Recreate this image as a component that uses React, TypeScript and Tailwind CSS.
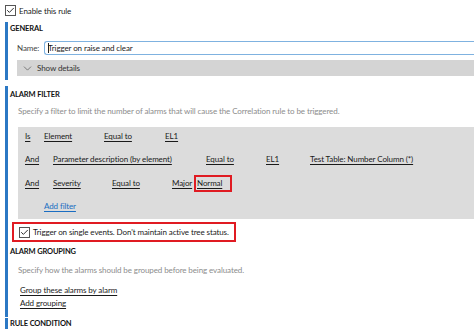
import { Check, ChevronDown } from 'lucide-react';

function Box() {
  return (
    <span className="flex h-[11px] w-[11px] shrink-0 items-center justify-center border border-[#555] bg-white">
      <Check className="h-[9px] w-[9px] text-[#222]" strokeWidth={2.5} />
    </span>
  );
}

function Cell({ w, children }: { w: string; children: React.ReactNode }) {
  return (
    <span className={`${w} shrink-0 whitespace-nowrap`}>
      <span className="underline underline-offset-2">{children}</span>
    </span>
  );
}

const heading = 'flex items-center text-[7.5px] font-bold tracking-[-0.15px] text-[#111]';

export default function App() {
  return (
    <div className="h-[329px] w-[474px] overflow-hidden whitespace-nowrap bg-white font-['Lato',sans-serif] text-[8px] leading-none tracking-[-0.1px] text-[#1a1a1a]">
      {/* Activer la règle */}
      <div className="flex h-[21px] items-center gap-[3px] pl-[5px]">
        <Box />
        <span className="text-[8px]">Enable this rule</span>
      </div>

      {/* General */}
      <div className="ml-[5px] mt-[1px] h-[58px] border-l-[3px] border-[#2b78c4] pl-[2px]">
        <div className={`${heading} h-[14px]`}>GENERAL</div>
        <div className="mt-[5px] flex h-[14px] items-center">
          <span className="w-[34px] pl-[7px] text-[#444]">Name:</span>
          <div className="flex h-[14px] flex-1 items-center rounded-l-[3px] border border-r-0 border-[#7fb2e0] pl-[3px]">
            <span className="mr-[-1px] h-[10px] w-px bg-[#222]" />
            Trigger on raise and clear
          </div>
        </div>
        <div className="ml-[7px] mt-[5px] flex h-[16px] items-center gap-[3px] bg-[#d4d4d4] pl-[4px] text-[#333]">
          <ChevronDown className="h-[13px] w-[13px] text-[#555]" strokeWidth={1.3} />
          Show details
        </div>
      </div>

      {/* Filtre d'alarmes */}
      <div className="ml-[5px] mt-[6px] h-[231px] border-l-[3px] border-[#2b78c4] pl-[2px]">
        <div className={`${heading} h-[18px]`}>ALARM FILTER</div>
        <div className="flex h-[14px] items-center pl-[8px] text-[#8c8c8c]">
          Specify a filter to limit the number of alarms that will cause the Correlation rule to be triggered.
        </div>
        <div className="ml-[8px] mt-[9px] h-[92px] bg-[#dcdcdc] pl-[7px] pt-[1px]">
          <div className="flex h-[16px] items-center">
            <Cell w="w-[19px]">Is</Cell>
            <Cell w="w-[60px]">Element</Cell>
            <Cell w="w-[61px]">Equal to</Cell>
            <Cell w="w-[30px]">EL1</Cell>
          </div>
          <div className="mt-[7px] flex h-[16px] items-center">
            <Cell w="w-[28px]">And</Cell>
            <Cell w="w-[153px]">Parameter description (by element)</Cell>
            <Cell w="w-[60px]">Equal to</Cell>
            <Cell w="w-[44px]">EL1</Cell>
            <Cell w="w-[130px]">Test Table: Number Column (*)</Cell>
          </div>
          <div className="mt-[8px] flex h-[16px] items-center">
            <Cell w="w-[28px]">And</Cell>
            <Cell w="w-[59px]">Severity</Cell>
            <Cell w="w-[60px]">Equal to</Cell>
            <Cell w="w-[22px]">Major</Cell>
            <span className="flex h-[17px] w-[38px] shrink-0 items-center border-2 border-[#e01b22] pl-[1px]">
              <span className="underline underline-offset-2">Normal</span>
            </span>
          </div>
          <div className="mt-[7px] flex h-[16px] items-center pl-[19px] text-[#1a6dc2]">
            <span className="underline underline-offset-2">Add filter</span>
          </div>
        </div>

        <div className="ml-[2px] mt-[3px] flex h-[20px] w-[224px] items-center gap-[3px] border-2 border-[#e01b22] pl-[5px]">
          <Box />
          <span>Trigger on single events. Don't maintain active tree status.</span>
        </div>

        {/* Groupement */}
        <div className={`${heading} h-[20px]`}>ALARM GROUPING</div>
        <div className="flex h-[16px] items-center pl-[8px] text-[#8c8c8c]">
          Specify how the alarms should be grouped before being evaluated.
        </div>
        <div className="mt-[5px] flex h-[13px] items-center pl-[10px]">
          <span className="underline underline-offset-2">Group these alarms by alarm</span>
        </div>
        <div className="flex h-[13px] items-center pl-[10px]">
          <span className="underline underline-offset-2">Add grouping</span>
        </div>
      </div>

      <div className="ml-[5px] mt-[1px] h-[20px] border-l-[3px] border-[#2b78c4] pl-[2px]">
        <div className={`${heading} h-[12px]`}>RULE CONDITION</div>
      </div>
    </div>
  );
}
